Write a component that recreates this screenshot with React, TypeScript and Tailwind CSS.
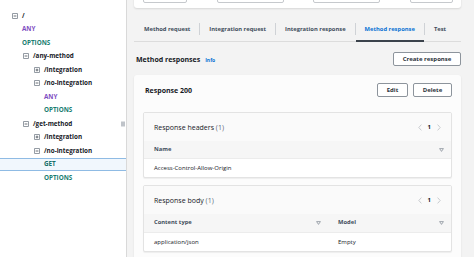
import React from "react";

type Row =
  | { kind: "path"; label: string; depth: number; open: boolean }
  | { kind: "method"; label: string; depth: number; selected?: boolean };

const rows: Row[] = [
  { kind: "path", label: "/", depth: 0, open: true },
  { kind: "method", label: "ANY", depth: 0 },
  { kind: "method", label: "OPTIONS", depth: 0 },
  { kind: "path", label: "/any-method", depth: 1, open: true },
  { kind: "path", label: "/integration", depth: 2, open: false },
  { kind: "path", label: "/no-integration", depth: 2, open: true },
  { kind: "method", label: "ANY", depth: 2 },
  { kind: "method", label: "OPTIONS", depth: 2 },
  { kind: "path", label: "/get-method", depth: 1, open: true },
  { kind: "path", label: "/integration", depth: 2, open: false },
  { kind: "path", label: "/no-integration", depth: 2, open: true },
  { kind: "method", label: "GET", depth: 2, selected: true },
  { kind: "method", label: "OPTIONS", depth: 2 },
];

const methodColor: Record<string, string> = {
  ANY: "text-[#7e4dc2]",
  OPTIONS: "text-[#187d70]",
  GET: "text-[#17716a]",
};

const indent = ["pl-[12px]", "pl-[23px]", "pl-[34px]"];
const methodIndent = ["pl-[22px]", "pl-[33px]", "pl-[44px]"];

function ToggleBox({ open }: { open: boolean }) {
  return (
    <svg width="6" height="6" viewBox="0 0 6 6" className="mr-[4px] shrink-0">
      <rect x="0.4" y="0.4" width="5.2" height="5.2" rx="0.6" fill="none" stroke="#6b7580" strokeWidth="0.8" />
      <line x1="1.6" y1="3" x2="4.4" y2="3" stroke="#444c56" strokeWidth="0.8" />
      {!open && <line x1="3" y1="1.6" x2="3" y2="4.4" stroke="#444c56" strokeWidth="0.8" />}
    </svg>
  );
}

function TreeRow({ row }: { row: Row }) {
  if (row.kind === "path") {
    return (
      <div className={`flex h-[13.5px] items-center ${indent[row.depth]}`}>
        <ToggleBox open={row.open} />
        <span className="whitespace-nowrap text-[6.3px] font-bold leading-none text-[#16191f]">{row.label}</span>
      </div>
    );
  }
  return (
    <div
      className={`flex h-[13.5px] items-center ${methodIndent[row.depth]} ${
        row.selected ? "border-y border-[#8fbbe4] bg-[#f1f7fd]" : ""
      }`}
    >
      <span className={`text-[6.3px] font-bold leading-none ${methodColor[row.label]}`}>{row.label}</span>
    </div>
  );
}

function FilterIcon() {
  return (
    <svg width="5" height="4" viewBox="0 0 5 4">
      <path d="M0.6 0.6 H4.4 L2.5 3.4 Z" fill="none" stroke="#7d8590" strokeWidth="0.7" strokeLinejoin="round" />
    </svg>
  );
}

function Pagination() {
  return (
    <div className="flex items-center gap-[6px]">
      <svg width="4" height="7" viewBox="0 0 4 7">
        <path d="M3.4 0.6 L0.8 3.5 L3.4 6.4" fill="none" stroke="#b4b8bd" strokeWidth="0.7" />
      </svg>
      <span className="text-[6px] font-bold leading-none text-[#16191f]">1</span>
      <svg width="4" height="7" viewBox="0 0 4 7">
        <path d="M0.6 0.6 L3.2 3.5 L0.6 6.4" fill="none" stroke="#b4b8bd" strokeWidth="0.7" />
      </svg>
    </div>
  );
}

function Button({ label, className = "" }: { label: string; className?: string }) {
  return (
    <div
      className={`flex h-[14px] items-center justify-center whitespace-nowrap rounded-[2px] border border-[#8d949c] bg-white text-[6px] font-bold leading-none text-[#2c333b] ${className}`}
    >
      {label}
    </div>
  );
}

const tabs = ["Method request", "Integration request", "Integration response", "Method response", "Test"];

export default function App() {
  return (
    <div className="flex h-[257px] w-[474px] overflow-hidden font-['Open_Sans',sans-serif] text-[#16191f]">
      <aside className="relative w-[127px] shrink-0 border-r border-[#d9d9d9] bg-white pt-[9px]">
        {rows.map((r, i) => (
          <TreeRow key={i} row={r} />
        ))}
        <svg width="4" height="6" viewBox="0 0 4 6" className="absolute right-[1px] top-[121px]">
          <line x1="1" y1="0.5" x2="1" y2="5.5" stroke="#5f6b7a" strokeWidth="0.8" />
          <line x1="3" y1="0.5" x2="3" y2="5.5" stroke="#5f6b7a" strokeWidth="0.8" />
        </svg>
      </aside>

      <main className="min-w-0 flex-1 bg-[#f3f3f3] pl-[7px] pr-[13px]">
        {/* top card, mostly scrolled out of view */}
        <div className="-mt-[20px] flex h-[28px] items-end gap-[29.5px] rounded-b-[3px] bg-white pb-[5px] pl-[9px] shadow-[0_1px_2px_rgba(0,0,0,0.12)]">
          <div className="h-[12px] w-[44px] rounded-[2px] border border-[#c6c9cd]" />
          <div className="h-[12px] w-[67px] rounded-[2px] border border-[#c6c9cd]" />
          <div className="h-[12px] w-[67px] rounded-[2px] border border-[#c6c9cd]" />
          <div className="h-[12px] w-[43px] rounded-[2px] border border-[#c6c9cd]" />
        </div>

        {/* tabs */}
        <div className="mt-[14px] flex h-[20px] border-b border-[#dcdcdc]">
          {tabs.map((t, i) => (
            <React.Fragment key={t}>
              {i > 0 && <div className="mt-[1px] h-[12px] w-px shrink-0 bg-[#cfd2d6]" />}
              <div
                className={`flex h-[20px] shrink-0 items-start pt-[3px] ${i === 0 ? "pl-[10px] pr-[9px]" : "px-[9px]"} ${
                  t === "Method response" ? "border-b-[2px] border-[#3b434c]" : ""
                }`}
              >
                <span
                  className={`whitespace-nowrap text-[5.8px] font-bold leading-[8px] ${
                    t === "Method response" ? "text-[#0972d3]" : "text-[#414d5c]"
                  }`}
                >
                  {t}
                </span>
              </div>
            </React.Fragment>
          ))}
        </div>

        {/* heading */}
        <div className="mt-[10px] flex h-[14px] items-center justify-between">
          <div className="flex items-baseline gap-[5px] pl-[2px]">
            <span className="text-[7px] font-bold leading-none text-[#16191f]">Method responses</span>
            <span className="text-[5px] font-bold leading-none text-[#0972d3]">Info</span>
          </div>
          <Button label="Create response" className="w-[68px]" />
        </div>

        {/* response card */}
        <div className="mt-[9px] rounded-[3px] bg-[#fcfcfc] px-[9px] pb-[10px] pt-[8px] shadow-[0_1px_2px_rgba(0,0,0,0.1)]">
          <div className="flex h-[14px] items-center justify-between">
            <span className="pl-[2px] text-[7px] font-bold leading-none">Response 200</span>
            <div className="flex gap-[5px]">
              <Button label="Edit" className="w-[31px]" />
              <Button label="Delete" className="w-[39px]" />
            </div>
          </div>

          {/* response headers */}
          <div className="mt-[15px] overflow-hidden rounded-[2px] border border-[#e3e3e3] bg-white shadow-[0_1px_1px_rgba(0,0,0,0.06)]">
            <div className="flex h-[28px] items-center justify-between bg-[#fafafa] pl-[10px] pr-[10px]">
              <span className="text-[7px] leading-none">
                Response headers <span className="text-[#5f6b7a]">(1)</span>
              </span>
              <Pagination />
            </div>
            <div className="flex h-[18px] items-center justify-between border-b border-[#ececec] bg-[#f6f6f6] pl-[10px] pr-[7px]">
              <span className="text-[5.8px] font-bold leading-none text-[#414d5c]">Name</span>
              <FilterIcon />
            </div>
            <div className="flex h-[18px] items-center pl-[10px]">
              <span className="text-[6px] leading-none">Access-Control-Allow-Origin</span>
            </div>
          </div>

          {/* response body */}
          <div className="mt-[7px] overflow-hidden rounded-[2px] border border-[#e3e3e3] bg-white shadow-[0_1px_1px_rgba(0,0,0,0.06)]">
            <div className="flex h-[28px] items-center justify-between bg-[#fafafa] pl-[10px] pr-[10px]">
              <span className="text-[7px] leading-none">
                Response body <span className="text-[#5f6b7a]">(1)</span>
              </span>
              <Pagination />
            </div>
            <div className="grid h-[19px] grid-cols-[184px_1fr] items-center border-b border-[#ececec] bg-[#f6f6f6]">
              <div className="flex items-center justify-between pl-[10px] pr-[7px]">
                <span className="text-[5.8px] font-bold leading-none text-[#414d5c]">Content type</span>
                <FilterIcon />
              </div>
              <div className="flex items-center justify-between pl-[10px] pr-[7px]">
                <span className="text-[5.8px] font-bold leading-none text-[#414d5c]">Model</span>
                <FilterIcon />
              </div>
            </div>
            <div className="grid h-[18px] grid-cols-[184px_1fr] items-center">
              <span className="pl-[10px] text-[6px] leading-none">application/json</span>
              <span className="pl-[10px] text-[6px] leading-none">Empty</span>
            </div>
          </div>
        </div>
      </main>
    </div>
  );
}
